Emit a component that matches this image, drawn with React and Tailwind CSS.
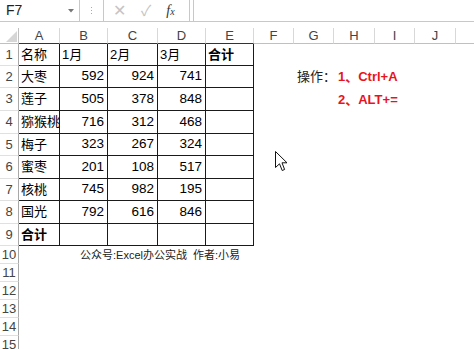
import React from 'react';

const COLS = ['w-[41px]', 'w-[48px]', 'w-[50px]', 'w-[48px]', 'w-[48px]', 'w-[40px]', 'w-[40px]', 'w-[41px]', 'w-[40px]', 'w-[41px]', 'w-[40px]'];
const LETTERS = ['A', 'B', 'C', 'D', 'E', 'F', 'G', 'H', 'I', 'J', ''];

const ROW_H = ['h-[22px]', 'h-[22px]', 'h-[23px]', 'h-[23px]', 'h-[22px]', 'h-[23px]', 'h-[22px]', 'h-[23px]', 'h-[22px]'];

const datos = [
  ['名称', '1月', '2月', '3月', '合计'],
  ['大枣', 592, 924, 741, ''],
  ['莲子', 505, 378, 848, ''],
  ['猕猴桃', 716, 312, 468, ''],
  ['梅子', 323, 267, 324, ''],
  ['蜜枣', 201, 108, 517, ''],
  ['核桃', 745, 982, 195, ''],
  ['国光', 792, 616, 846, ''],
  ['合计', '', '', '', ''],
];

const font = "font-['Liberation_Sans','Noto_Sans_CJK_SC',sans-serif]";

const RowNum = ({n, h}) => (
  <div className={`${h} w-[19px] shrink-0 border-r border-b border-r-[#a8a8a8] border-b-[#e0e0e0] flex items-center justify-center text-[13px] text-[#444]`}>
    {n}
  </div>
);

const Celda = ({i, children, tabla, className = ''}) => (
  <div className={`${COLS[i]} shrink-0 h-full flex items-center whitespace-nowrap overflow-visible ${tabla ? 'border-r border-b border-[#1a1a1a]' : ''} ${className}`}>
    {children}
  </div>
);

const Cursor = () => (
  <svg className="absolute left-[275px] top-[151px]" width="14" height="21" viewBox="0 0 14 21">
    <path d="M0.5 0.5 L0.5 16.5 L4.5 12.8 L7.2 19.5 L9.6 18.5 L7 11.8 L12 11.8 Z" fill="white" stroke="#111" strokeWidth="1" strokeLinejoin="miter"/>
  </svg>
);

const App = () => {
  return (
    <div className={`relative w-[474px] h-[349px] overflow-hidden bg-white text-black ${font}`}>
      {/* barra de fórmulas */}
      <div className="flex h-[22px]">
        <div className="w-[80px] border-r border-b border-[#c8c8c8] flex items-center justify-between pl-[6px] pr-[5px]">
          <span className="text-[14px] text-[#222]">F7</span>
          <svg width="6" height="4" viewBox="0 0 6 4"><path d="M0 0 L6 0 L3 3.5 Z" fill="#777"/></svg>
        </div>
        <div className="w-[23px] border-b border-[#c8c8c8] flex flex-col items-center justify-center gap-[2px]">
          <span className="w-[1px] h-[1px] bg-[#aaa]"/>
          <span className="w-[1px] h-[1px] bg-[#aaa]"/>
          <span className="w-[1px] h-[1px] bg-[#aaa]"/>
        </div>
        <div className="w-[87px] border-l border-r border-b border-[#c8c8c8] flex items-center pl-[9px] gap-[15px]">
          <span className="text-[16px] leading-none text-[#c4c4c4]">✕</span>
          <span className="text-[15px] leading-none text-[#c4c4c4]">✓</span>
          <span className="font-['Liberation_Serif',serif] italic text-[14px] leading-none text-[#333]">f<span className="text-[10px]">x</span></span>
        </div>
        <div className="w-[3px] border-b border-[#c8c8c8]"/>
        <div className="flex-1 border-l border-b border-[#c8c8c8]"/>
      </div>

      <div className="h-[6px]"/>

      {/* encabezado de columnas */}
      <div className="flex h-[16px]">
        <div className="w-[19px] shrink-0 border-r border-b border-[#c0c0c0] flex items-end justify-end pr-[1px] pb-[1px]">
          <svg width="11" height="11" viewBox="0 0 11 11"><path d="M11 0 L11 11 L0 11 Z" fill="#d6d6d6"/></svg>
        </div>
        {LETTERS.map((l, i) => (
          <div key={i} className={`${COLS[i]} shrink-0 border-r border-b text-[13px] leading-none flex items-center justify-center text-[#444] ${i < 5 ? 'border-b-[#333] border-r-[#d8d8d8]' : 'border-[#d8d8d8] border-b-[#c0c0c0]'}`}>
            {l}
          </div>
        ))}
      </div>

      {/* filas con datos */}
      {datos.map((fila, r) => (
        <div key={r} className={`flex ${ROW_H[r]}`}>
          <RowNum n={r + 1} h={ROW_H[r]}/>
          {fila.map((v, c) => {
            const numero = typeof v === 'number';
            const negrita = v === '合计';
            return (
              <Celda key={c} i={c} tabla
                     className={`${numero ? 'justify-end pr-[3px] text-[13.5px]' : 'pl-[2px] text-[13px]'} ${negrita ? 'font-bold' : ''}`}>
                {v}
              </Celda>
            );
          })}
          <Celda i={5}/>
          <Celda i={6} className="pl-[3px] text-[13px] text-[#222]">
            {r === 1 ? '操作：' : ''}
          </Celda>
          <Celda i={7} className="pl-[4px] text-[13px] font-bold text-[#e8141c]">
            {r === 1 ? '1、Ctrl+A' : r === 2 ? '2、ALT+=' : ''}
          </Celda>
          <Celda i={8}/>
          <Celda i={9}/>
          <Celda i={10}/>
        </div>
      ))}

      {/* filas vacías */}
      {[10, 11, 12, 13, 14, 15].map((n) => (
        <div key={n} className="flex h-[18px]">
          <RowNum n={n} h="h-[18px]"/>
          <div className="flex-1 flex items-center">
            {n === 10
              ? <span className="ml-[61px] text-[11px] text-[#222] whitespace-nowrap">公众号:Excel办公实战&nbsp;&nbsp;作者:小易</span>
              : null}
          </div>
        </div>
      ))}

      <Cursor/>
    </div>
  );
};

export default App;
